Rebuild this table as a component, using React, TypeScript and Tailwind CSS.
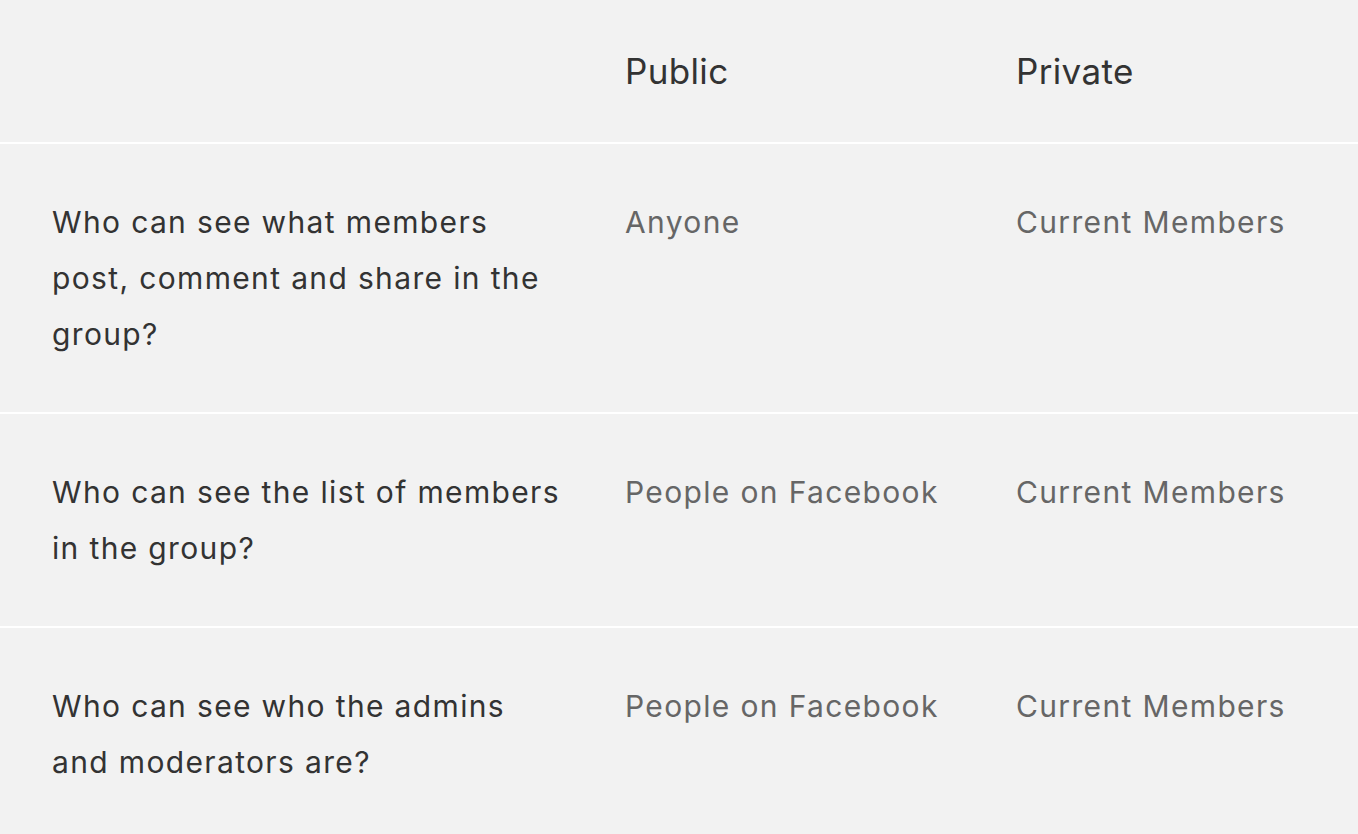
import React from 'react';

const rows = [
  {
    q: ['Who can see what members', 'post, comment and share in the', 'group?'],
    pub: 'Anyone',
    priv: 'Current Members',
  },
  {
    q: ['Who can see the list of members', 'in the group?'],
    pub: 'People on Facebook',
    priv: 'Current Members',
  },
  {
    q: ['Who can see who the admins', 'and moderators are?'],
    pub: 'People on Facebook',
    priv: 'Current Members',
  },
];

export default function App() {
  return (
    <div
      className="min-h-screen bg-[#f2f2f2] text-[#333333]"
      style={{ fontFamily: 'Inter, "Noto Sans", sans-serif' }}>
      <div className="grid grid-cols-[573px_391px_1fr] pl-[52px] h-[142px] items-center text-[35px] tracking-[0.01em] leading-[56px]">
        <div />
        <div>Public</div>
        <div>Private</div>
      </div>
      {rows.map((row, i) =>
      <div
        key={i}
        className="grid grid-cols-[573px_391px_1fr] pl-[52px] py-[50px] border-t-2 border-white text-[30px] tracking-[0.045em] leading-[56px]">
          <div>
            {row.q.map((line, j) =>
          <div key={j} className="whitespace-nowrap">{line}</div>
          )}
          </div>
          <div className="text-[#666666] whitespace-nowrap">{row.pub}</div>
          <div className="text-[#666666] whitespace-nowrap">{row.priv}</div>
        </div>
      )}
    </div>);

}
